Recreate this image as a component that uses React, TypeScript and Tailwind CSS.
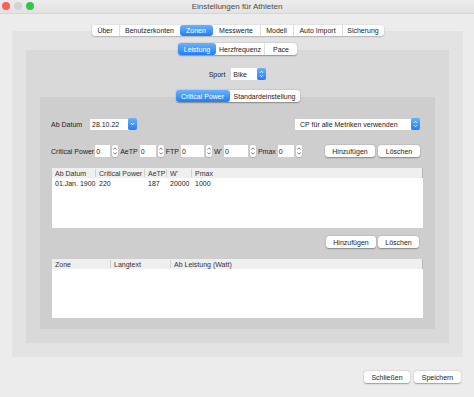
import type { ReactNode } from 'react'

const MAIN_TABS = [
  { label: 'Über', w: 'w-[27px]' },
  { label: 'Benutzerkonten', w: 'w-[61px]' },
  { label: 'Zonen', w: 'w-[33px]', active: true },
  { label: 'Messwerte', w: 'w-[47px]' },
  { label: 'Modell', w: 'w-[33px]' },
  { label: 'Auto Import', w: 'w-[49px]' },
  { label: 'Sicherung', w: 'w-[42px]' },
]

const SUB_TABS = [
  { label: 'Leistung', w: 'w-[38px]', active: true },
  { label: 'Herzfrequenz', w: 'w-[48px]' },
  { label: 'Pace', w: 'w-[33px]' },
]

const CP_TABS = [
  { label: 'Critical Power', w: 'w-[54px]', active: true },
  { label: 'Standardeinstellung', w: 'w-[70px]' },
]

type Tab = { label: string; w: string; active?: boolean }

function Segmented({ tabs, h }: { tabs: Tab[]; h: string }) {
  return (
    <div className={`relative z-10 flex ${h} justify-center`}>
      <div className="flex rounded-[3px] bg-white shadow-[0_0.5px_1.5px_rgba(0,0,0,0.35)]">
        {tabs.map((t, i) => (
          <div
            key={t.label}
            className={`flex items-center justify-center whitespace-nowrap ${t.w} ${
              t.active
                ? 'rounded-[3px] bg-linear-to-b from-[#69b1fb] to-[#1c7ef6] text-white'
                : 'text-[#222]'
            } ${i > 0 && !t.active && !tabs[i - 1].active ? 'border-l border-[#dedede]' : ''}`}
          >
            {t.label}
          </div>
        ))}
      </div>
    </div>
  )
}

function Stepper() {
  return (
    <div className="flex h-[12px] w-[6px] items-center justify-center rounded-[2px] bg-white shadow-[0_0.5px_1px_rgba(0,0,0,0.3)]">
      <svg width="6" height="12" viewBox="0 0 6 12" fill="none" stroke="#666" strokeWidth="0.8">
        <polyline points="1.5,4.5 3,2.8 4.5,4.5" />
        <polyline points="1.5,7.5 3,9.2 4.5,7.5" />
      </svg>
    </div>
  )
}

function BlueUpDown() {
  return (
    <div className="flex h-[12px] w-[9px] items-center justify-center rounded-[2px] bg-linear-to-b from-[#69b1fb] to-[#1c7ef6]">
      <svg width="9" height="12" viewBox="0 0 9 12" fill="none" stroke="white" strokeWidth="0.9">
        <polyline points="3,4.8 4.5,3.2 6,4.8" />
        <polyline points="3,7.2 4.5,8.8 6,7.2" />
      </svg>
    </div>
  )
}

function BlueDown() {
  return (
    <div className="flex h-[12px] w-[9px] items-center justify-center rounded-[2px] bg-linear-to-b from-[#69b1fb] to-[#1c7ef6]">
      <svg width="9" height="12" viewBox="0 0 9 12" fill="none" stroke="white" strokeWidth="1">
        <polyline points="2.8,5 4.5,6.8 6.2,5" />
      </svg>
    </div>
  )
}

function Button({ children, w }: { children: ReactNode; w: string }) {
  return (
    <div
      className={`flex h-[12px] ${w} items-center justify-center rounded-[3px] bg-white text-[#222] shadow-[0_0.5px_1.5px_rgba(0,0,0,0.35)]`}
    >
      {children}
    </div>
  )
}

function NumField({ w, label }: { w: string; label: string }) {
  return (
    <>
      <span className="ml-[2px] mr-[2px] whitespace-nowrap text-[#222]">{label}</span>
      <div className={`flex h-[12px] ${w} shrink-0 items-center bg-white pl-[1px] text-[#222]`}>0</div>
      <div className="ml-[2px]">
        <Stepper />
      </div>
    </>
  )
}

type Col = { label: string; w: string }

function Table({ cols, rows, h }: { cols: Col[]; rows: string[][]; h: string }) {
  return (
    <div className={`flex ${h} flex-col bg-white`}>
      <div className="flex h-[10px] shrink-0 items-center bg-[#efefef] text-[#333]">
        {cols.map((c, i) => (
          <div
            key={c.label}
            className={`flex h-[8px] shrink-0 items-center whitespace-nowrap px-[3px] ${c.w} ${
              i < cols.length - 1 ? 'border-r border-[#d2d2d2]' : ''
            }`}
          >
            {c.label}
          </div>
        ))}
        <div className="ml-auto h-full w-[1px] bg-[#b8b8b8]" />
      </div>
      {rows.map((r, ri) => (
        <div key={ri} className="flex h-[10px] items-center text-[#222]">
          {r.map((v, i) => (
            <div key={i} className={`shrink-0 whitespace-nowrap px-[3px] ${cols[i].w}`}>
              {v}
            </div>
          ))}
        </div>
      ))}
    </div>
  )
}

export default function App() {
  return (
    <div className="flex h-[397px] w-[474px] flex-col overflow-hidden bg-[#ececec] font-['Liberation_Sans',Arial,sans-serif] text-[7px] leading-none">
      {/* title bar */}
      <div className="relative flex h-[14px] shrink-0 items-center justify-center border-b border-[#d6d6d6] bg-linear-to-b from-[#ececec] to-[#e2e2e2]">
        <div className="absolute left-[2px] top-[2px] flex gap-[4px]">
          <div className="h-[8px] w-[8px] rounded-full bg-[#fc5f57]" />
          <div className="h-[8px] w-[8px] rounded-full bg-[#d3d3d3]" />
          <div className="h-[8px] w-[8px] rounded-full bg-[#2ec845]" />
        </div>
        <span className="text-[8px] text-[#4a4a4a]">Einstellungen für Athleten</span>
      </div>

      <div className="mt-[11px] flex flex-col pl-[12px] pr-[11px]">
        <Segmented tabs={MAIN_TABS} h="h-[11px]" />

        {/* outer panel */}
        <div className="-mt-[5px] flex flex-col bg-[#e3e3e3] px-[14px] pb-[14px] pt-[12px]">
          <Segmented tabs={SUB_TABS} h="h-[12px]" />

          {/* second panel */}
          <div className="-mt-[5px] flex flex-col bg-[#d9d9d9] px-[14px] pb-[14px] pt-[18px]">
            <div className="flex h-[12px] items-center justify-center">
              <span className="mr-[6px] text-[#222]">Sport</span>
              <div className="flex h-[12px] w-[26px] items-center bg-white pl-[2px] text-[#222]">Bike</div>
              <BlueUpDown />
            </div>

            <div className="mt-[10px]">
              <Segmented tabs={CP_TABS} h="h-[12px]" />
            </div>

            {/* third panel */}
            <div className="-mt-[5px] flex flex-col bg-[#cecece] px-[12px] pb-[11px] pt-[21px]">
              <div className="flex h-[12px] items-center">
                <span className="ml-[-1px] w-[39px] text-[#222]">Ab Datum</span>
                <div className="flex h-[11px] w-[38px] items-center bg-white pl-[2px] text-[#222]">28.10.22</div>
                <BlueDown />
                <div className="ml-auto mr-[3px] flex items-center">
                  <div className="flex h-[11px] w-[116px] items-center bg-white pl-[5px] text-[#222]">
                    CP für alle Metriken verwenden
                  </div>
                  <BlueUpDown />
                </div>
              </div>

              <div className="mt-[15px] flex h-[12px] items-center">
                <span className="ml-[-1px] mr-[1px] whitespace-nowrap text-[#222]">Critical Power</span>
                <div className="flex h-[12px] w-[15px] shrink-0 items-center bg-white pl-[1px] text-[#222]">0</div>
                <div className="ml-[2px]">
                  <Stepper />
                </div>
                <NumField label="AeTP" w="w-[16px]" />
                <NumField label="FTP" w="w-[23px]" />
                <NumField label="W'" w="w-[24px]" />
                <NumField label="Pmax" w="w-[16px]" />
                <div className="ml-auto mr-[3px] flex gap-[3px]">
                  <Button w="w-[50px]">Hinzufügen</Button>
                  <Button w="w-[42px]">Löschen</Button>
                </div>
              </div>

              <div className="mt-[11px]">
                <Table
                  h="h-[60px]"
                  cols={[
                    { label: 'Ab Datum', w: 'w-[44px]' },
                    { label: 'Critical Power', w: 'w-[49px]' },
                    { label: 'AeTP', w: 'w-[22px]' },
                    { label: "W'", w: 'w-[25px]' },
                    { label: 'Pmax', w: 'w-[40px]' },
                  ]}
                  rows={[['01.Jan. 1900', '220', '187', '20000', '1000']]}
                />
              </div>

              <div className="mt-[8px] flex justify-end pr-[4px]">
                <div className="flex gap-[2px]">
                  <Button w="w-[50px]">Hinzufügen</Button>
                  <Button w="w-[41px]">Löschen</Button>
                </div>
              </div>

              <div className="mt-[11px]">
                <Table
                  h="h-[59px]"
                  cols={[
                    { label: 'Zone', w: 'w-[59px]' },
                    { label: 'Langtext', w: 'w-[60px]' },
                    { label: 'Ab Leistung (Watt)', w: 'w-[80px]' },
                  ]}
                  rows={[]}
                />
              </div>
            </div>
          </div>
        </div>

        <div className="mt-[14px] flex justify-end gap-[4px] pr-[2px]">
          <Button w="w-[46px]">Schließen</Button>
          <Button w="w-[47px]">Speichern</Button>
        </div>
      </div>
    </div>
  )
}
